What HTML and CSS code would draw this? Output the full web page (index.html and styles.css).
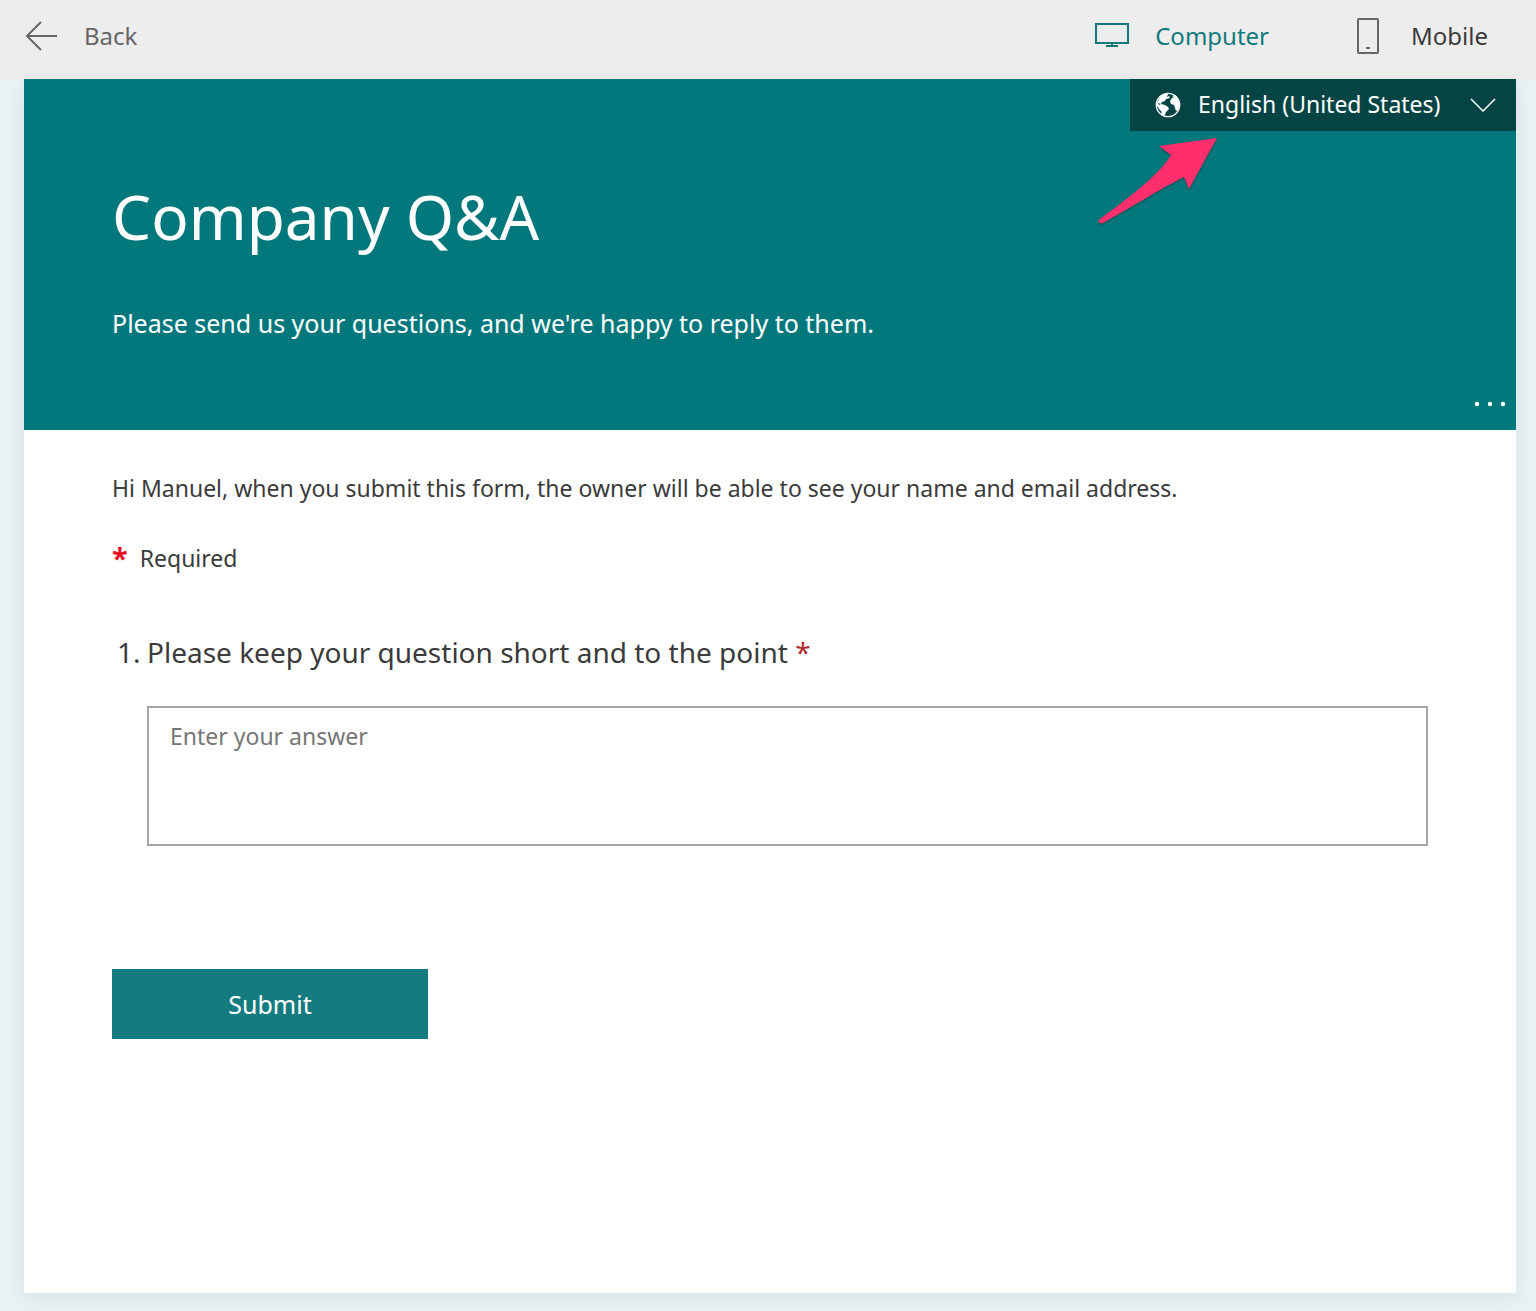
FILE: index.html
```html
<!DOCTYPE html>
<html lang="en">
  <head>
    <meta charset="UTF-8">
    <title>Company Q&amp;A</title>
    <meta name="viewport" content="width=device-width, initial-scale=1">
    <link rel="stylesheet" href="styles.css">
  </head>
  <body>
    <header class="topbar">
      <button type="button" class="top-btn back">
        <svg width="34" height="30" viewBox="0 0 34 30" fill="none" stroke="currentColor" stroke-width="2"><path d="M33 15H3M17 1L3 15l14 14"/></svg>
        Back
      </button>
      <div class="views">
        <button type="button" class="top-btn active">
          <svg width="34" height="28" viewBox="0 0 34 28" fill="none" stroke="currentColor" stroke-width="2"><path d="M1 2h32v19H1zM17 21v3M11 24h12"/></svg>
          Computer
        </button>
        <button type="button" class="top-btn mobile">
          <svg width="22" height="36" viewBox="0 0 22 36" fill="none" stroke="#666" stroke-width="2"><rect x="1" y="1" width="20" height="34" rx="1"/><path d="M9 30h4"/></svg>
          Mobile
        </button>
      </div>
    </header>
    <main class="form-page">
      <div class="banner">
        <div class="language">
          <svg width="26" height="26" viewBox="0 0 26 26"><circle cx="13" cy="13" r="11.700" fill="none" stroke="#fff" stroke-width="1.300"/><path fill="#fff" d="M5 5l4-3 4 0-1 3 2-1 1 2-4 1-1 2-3 1-1 2-3-1 1 2 2-1 4 1 3 2 1 2-3 3-1 3-3 1-1-5-2-2-1-2-2-2zM17 4l3-1c3 3 5 6 5 11l-2 4-2 1-1-3-1-3-3-1-1-3 2-3 2-1z"/></svg>
          <select id="language" aria-label="Language">
            <option>English (United States)</option>
          </select>
          <svg class="chevron" width="26" height="14" viewBox="0 0 26 14" fill="none" stroke="#fff" stroke-width="1.500"><path d="M1 1l12 12L25 1"/></svg>
        </div>
        <h1>Company Q&amp;A</h1>
        <p>Please send us your questions, and we're happy to reply to them.</p>
        <button type="button" class="more" aria-label="More options">
          <svg width="32" height="6" viewBox="0 0 32 6" fill="#fff"><circle cx="3" cy="3" r="2.200"/><circle cx="16" cy="3" r="2.200"/><circle cx="29" cy="3" r="2.200"/></svg>
        </button>
        <svg class="arrow" width="124" height="94" viewBox="0 0 124 94"><path fill="#ff2f6e" d="M121 4L63 12l12 9C65 38 42 57 4 85c-3 3-1 5 3 4C41 70 64 55 88 43l5 12z"/></svg>
      </div>
      <form class="content">
        <p class="notice">Hi Manuel, when you submit this form, the owner will be able to see your name and email address.</p>
        <p class="required"><span class="star">*</span>Required</p>
        <div class="question">
          <label for="answer"><span class="number">1.</span>Please keep your question short and to the point <span class="mark">*</span></label>
          <textarea id="answer" placeholder="Enter your answer" required></textarea>
        </div>
        <button type="submit" class="submit">Submit</button>
      </form>
    </main>
  </body>
</html>
```
FILE: styles.css
```css
* {
  box-sizing: border-box;
}

body {
  margin: 0;
  min-height: 100vh;
  display: flex;
  flex-direction: column;
  padding-bottom: 18px;
  background: #e8f1f4;
  color: #3b3b3b;
  font-family: "Noto Sans", "Open Sans", sans-serif;
  font-size: 23px;
  line-height: 32px;
}

button, select, textarea {
  font-family: inherit;
}

h1, p {
  margin: 0;
}

.topbar {
  display: flex;
  justify-content: space-between;
  align-items: center;
  height: 79px;
  padding: 0 48px 8px 24px;
  background: #ededed;
}

.top-btn {
  display: flex;
  align-items: center;
  gap: 26px;
  padding: 0;
  border: none;
  background: none;
  color: #3b3b3b;
  font-size: 24px;
}

.back {
  color: #666;
}

.views {
  display: flex;
  gap: 88px;
}

.active {
  color: #11797c;
}

.mobile {
  gap: 32px;
}

.form-page {
  flex: 1;
  margin: 0 20px 0 24px;
  background: #fff;
  box-shadow: 0 4px 16px rgba(0, 60, 70, 0.08);
}

.banner {
  position: relative;
  height: 351px;
  padding: 95px 88px 0;
  background: #03787c;
  color: #fff;
}

.banner h1 {
  font-size: 62px;
  font-weight: 400;
  line-height: 84px;
}

.banner p {
  margin-top: 49px;
  font-size: 25px;
}

.language {
  position: absolute;
  top: 0;
  right: 0;
  display: flex;
  align-items: center;
  width: 386px;
  height: 52px;
  padding-left: 25px;
  background: #044445;
}

.language select {
  flex: 1;
  align-self: stretch;
  margin: 0 -46px 0 0;
  padding: 0 46px 2px 17px;
  border: none;
  appearance: none;
  background: none;
  color: #fff;
  font-size: 23px;
}

.chevron {
  margin-right: 20px;
  pointer-events: none;
}

.more {
  position: absolute;
  right: 10px;
  bottom: 16px;
  display: flex;
  padding: 7px 0;
  border: none;
  background: none;
}

.arrow {
  position: absolute;
  top: 55px;
  right: 296px;
  filter: drop-shadow(0 1px 1px rgba(0, 0, 0, 0.4));
}

.content {
  padding: 42px 88px 80px;
}

.required {
  display: flex;
  gap: 12px;
  margin-top: 38px;
}

.star {
  color: #e81123;
  font-size: 29px;
  font-weight: 700;
}

.question {
  margin: 60px 0 123px;
}

.question label {
  display: block;
  font-size: 28px;
  line-height: 36px;
}

.number {
  display: inline-block;
  width: 35px;
  padding-left: 5px;
}

.mark {
  color: #b2292e;
}

.question textarea {
  display: block;
  width: calc(100% - 35px);
  height: 140px;
  margin: 36px 0 0 35px;
  padding: 12px 21px;
  border: 2px solid #a6a6a6;
  resize: none;
  font-size: 23px;
  line-height: 32px;
}

.question textarea::placeholder {
  color: #767676;
}

.submit {
  width: 316px;
  height: 70px;
  border: none;
  background: #147b7f;
  color: #fff;
  font-size: 25px;
}
```
